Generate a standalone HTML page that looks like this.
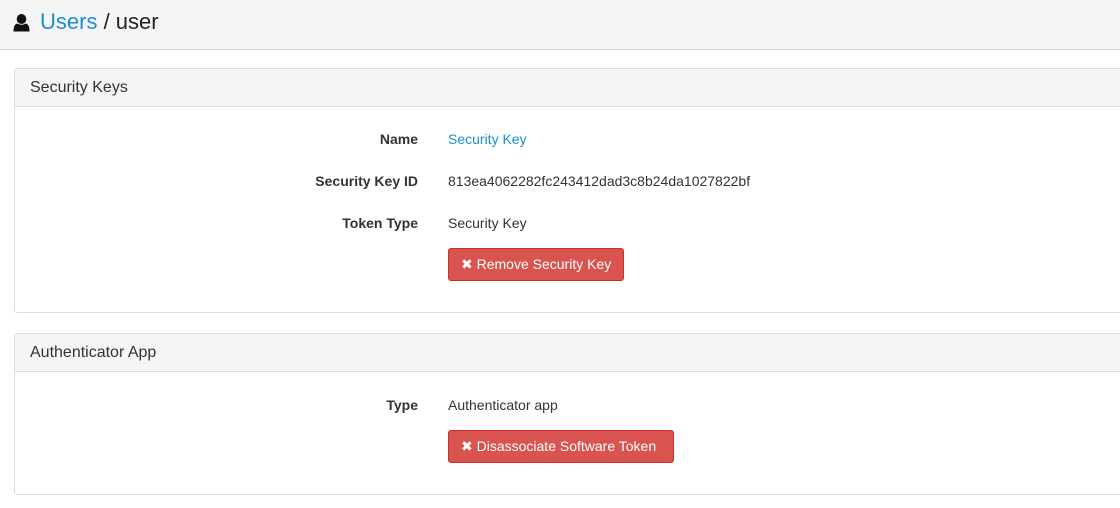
<!DOCTYPE html>
<html><head><style>
body{margin:0;width:1120px;height:508px;overflow:hidden;background:#fff;font-family:"Liberation Sans",sans-serif;color:#333;font-size:14px}
.hdr{position:absolute;left:0;top:0;width:1120px;height:49px;background:#f5f5f5;border-bottom:1px solid #d5d5d5}
.hdr .t{position:absolute;left:40px;top:9px;font-size:22px;color:#222}
.hdr a{color:#1a8fd1;text-decoration:none}
.panel{position:absolute;left:14px;width:1120px;border:1px solid #ddd;border-radius:3px;background:#fff}
.ph{height:37px;background:#f5f5f5;border-bottom:1px solid #ddd;font-size:16px;line-height:37px;padding-left:15px;color:#333}
.lab{position:absolute;width:403px;text-align:right;font-weight:bold;left:0}
.val{position:absolute;left:433px}
.btn{position:absolute;left:433px;height:33px;background:#d9534f;border:1px solid #c9302c;border-radius:3px;color:#fff;line-height:31px;padding:0 12px;box-sizing:border-box;font-size:14px;white-space:nowrap}
</style></head><body>
<div class="hdr">
<svg style="position:absolute;left:13px;top:14px" width="17" height="18" viewBox="0 0 17 18"><ellipse cx="8.5" cy="5" rx="4.8" ry="5" fill="#111"/><path d="M0.5 17.5 Q0.5 10 4.5 9.5 Q8.5 12 12.5 9.5 Q16.5 10 16.5 17.5 Z" fill="#111"/></svg>
<div class="t"><a>Users</a> / user</div></div>
<div class="panel" style="top:68px;height:243px">
<div class="ph">Security Keys</div>
<div class="lab" style="top:62px">Name</div><div class="val" style="top:62px;color:#1a8fd1">Security Key</div>
<div class="lab" style="top:104px">Security Key ID</div><div class="val" style="top:104px">813ea4062282fc243412dad3c8b24da1027822bf</div>
<div class="lab" style="top:146px">Token Type</div><div class="val" style="top:146px">Security Key</div>
<div class="btn" style="top:179px;width:176px">✖ Remove Security Key</div>
</div>
<div class="panel" style="top:333px;height:160px">
<div class="ph">Authenticator App</div>
<div class="lab" style="top:63px">Type</div><div class="val" style="top:63px">Authenticator app</div>
<div class="btn" style="top:96px;width:226px">✖ Disassociate Software Token</div>
</div>
</body></html>
